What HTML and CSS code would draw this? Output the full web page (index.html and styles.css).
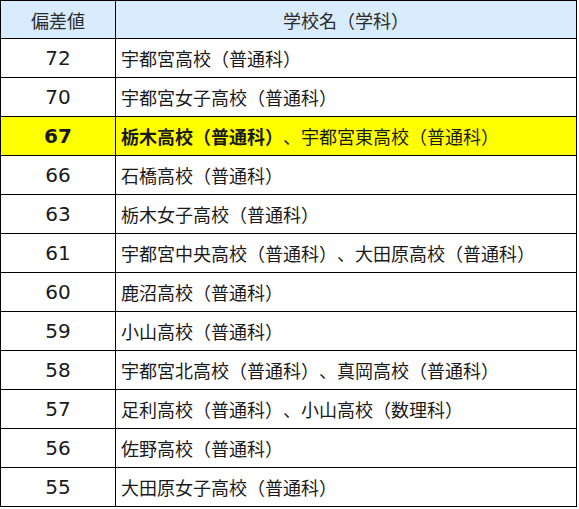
FILE: index.html
```html
<!DOCTYPE html>
<html lang="ja">
<head>
<meta charset="utf-8">
<link rel="stylesheet" href="styles.css">
</head>
<body>
<div class="table">
  <div class="cell head">偏差値</div>
  <div class="cell head name-head">学校名（学科）</div>

  <div class="cell num">72</div>
  <div class="cell name">宇都宮高校（普通科）</div>

  <div class="cell num">70</div>
  <div class="cell name">宇都宮女子高校（普通科）</div>

  <div class="cell num hl strong">67</div>
  <div class="cell name hl"><span class="strong">栃木高校（普通科）</span>、宇都宮東高校（普通科）</div>

  <div class="cell num">66</div>
  <div class="cell name">石橋高校（普通科）</div>

  <div class="cell num">63</div>
  <div class="cell name">栃木女子高校（普通科）</div>

  <div class="cell num">61</div>
  <div class="cell name">宇都宮中央高校（普通科）、大田原高校（普通科）</div>

  <div class="cell num">60</div>
  <div class="cell name">鹿沼高校（普通科）</div>

  <div class="cell num">59</div>
  <div class="cell name">小山高校（普通科）</div>

  <div class="cell num">58</div>
  <div class="cell name">宇都宮北高校（普通科）、真岡高校（普通科）</div>

  <div class="cell num">57</div>
  <div class="cell name">足利高校（普通科）、小山高校（数理科）</div>

  <div class="cell num">56</div>
  <div class="cell name">佐野高校（普通科）</div>

  <div class="cell num">55</div>
  <div class="cell name">大田原女子高校（普通科）</div>
</div>
</body>
</html>
```

FILE: styles.css
```css
html, body {
  margin: 0;
  padding: 0;
  background: #ffffff;
}

.table {
  display: grid;
  grid-template-columns: 115px 461px;
  grid-template-rows: 38px repeat(12, 39px);
  width: 577px;
  box-sizing: border-box;
  border-top: 1px solid #000;
  border-left: 1px solid #000;
  font-family: "Noto Sans CJK JP", "DejaVu Sans", sans-serif;
  color: #1a1a1a;
  text-spacing-trim: space-all;
  font-feature-settings: "chws" 0, "halt" 0;
}

.cell {
  box-sizing: border-box;
  border-right: 1px solid #000;
  border-bottom: 1px solid #000;
  display: flex;
  align-items: center;
  background: #ffffff;
  font-size: 18px;
  line-height: 1;
  white-space: nowrap;
}

.head {
  background: #d9ecfd;
  justify-content: center;
  color: #2a2a2a;
}

.num {
  justify-content: center;
  font-family: "DejaVu Sans", sans-serif;
  font-size: 20px;
}

.name {
  padding-left: 5px;
}

.hl {
  background: #ffff00;
}

.strong {
  font-weight: bold;
}
```
